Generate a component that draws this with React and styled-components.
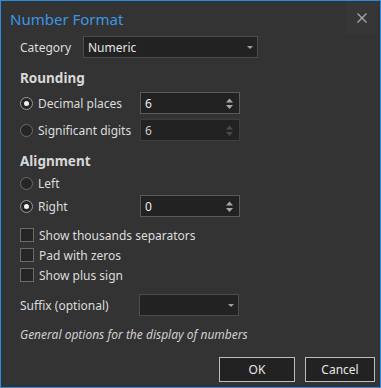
import styled, { createGlobalStyle } from 'styled-components';

const GlobalStyle = createGlobalStyle`
  html, body {
    margin: 0;
    padding: 0;
    background: #333333;
  }
  * {
    box-sizing: border-box;
  }
`;

const App = () => {
  return (
    <>
      <GlobalStyle />
      <Window>
        <TitleBar>
          <Title>Number Format</Title>
          <CloseButton aria-label="Close">
            <svg width="10" height="10" viewBox="0 0 10 10">
              <path d="M0.5 0.5 L9.5 9.5 M9.5 0.5 L0.5 9.5" stroke="#a8a8a8" strokeWidth="1.3" />
            </svg>
          </CloseButton>
        </TitleBar>

        <Body>
          <CategoryRow>
            <Label>Category</Label>
            <Select $width={175}>
              <span>Numeric</span>
              <DropArrow />
            </Select>
          </CategoryRow>

          <Heading>Rounding</Heading>
          <FieldRow $top={4}>
            <RadioLabel>
              <Radio $checked />
              Decimal places
            </RadioLabel>
            <Spinner value="6" />
          </FieldRow>
          <FieldRow $top={5}>
            <RadioLabel>
              <Radio />
              Significant digits
            </RadioLabel>
            <Spinner value="6" disabled />
          </FieldRow>

          <Heading>Alignment</Heading>
          <FieldRow $top={1}>
            <RadioLabel>
              <Radio />
              Left
            </RadioLabel>
          </FieldRow>
          <FieldRow $top={1}>
            <RadioLabel>
              <Radio $checked />
              Right
            </RadioLabel>
            <Spinner value="0" />
          </FieldRow>

          <Checks>
            <CheckRow>
              <CheckBox />
              Show thousands separators
            </CheckRow>
            <CheckRow>
              <CheckBox />
              Pad with zeros
            </CheckRow>
            <CheckRow>
              <CheckBox />
              Show plus sign
            </CheckRow>
          </Checks>

          <FieldRow $top={9}>
            <Label>Suffix (optional)</Label>
            <Select $width={100}>
              <span />
              <DropArrow />
            </Select>
          </FieldRow>

          <Hint>General options for the display of numbers</Hint>
        </Body>

        <Footer>
          <Button $width={76}>OK</Button>
          <Button $width={70}>Cancel</Button>
        </Footer>
      </Window>
    </>
  );
};

const Spinner = ({ value, disabled }) => (
  <SpinBox $disabled={disabled}>
    <SpinValue>{value}</SpinValue>
    <SpinArrows $disabled={disabled}>
      <svg width="9" height="13" viewBox="0 0 9 13">
        <path d="M4.5 1.5 L8 5.5 L1 5.5 Z" />
        <path d="M1 8 L8 8 L4.5 12 Z" />
      </svg>
    </SpinArrows>
  </SpinBox>
);

export default App;

//~~~~~~~~~~~~~~~~~~~
// Styled-Components
//~~~~~~~~~~~~~~~~~~~

const Window = styled.div`
  width: 381px;
  height: 388px;
  border: 1px solid #2a8ae0;
  background: #333333;
  color: #dcdcdc;
  font-family: 'Noto Sans', 'Open Sans', sans-serif;
  font-size: 12px;
  display: flex;
  flex-direction: column;
`;

const TitleBar = styled.div`
  height: 34px;
  display: flex;
  align-items: flex-start;
  justify-content: space-between;
`;

const Title = styled.h1`
  margin: 8px 0 0 9px;
  font-size: 15px;
  font-weight: normal;
  line-height: 20px;
  color: #3c97e3;
`;

const CloseButton = styled.button`
  width: 33px;
  height: 32px;
  margin: 1px 2px 0 0;
  border: none;
  background: #363636;
  display: flex;
  align-items: center;
  justify-content: center;
  padding: 0;
`;

const Body = styled.div`
  padding-left: 19px;
  display: flex;
  flex-direction: column;
  flex: 1;
`;

const CategoryRow = styled.div`
  display: flex;
  align-items: center;
  height: 22px;
  margin-top: 1px;

  & > span:first-child {
    width: 63px;
  }
`;

const Label = styled.span`
  width: 119px;
  white-space: nowrap;
`;

const Select = styled.div`
  width: ${(p) => p.$width}px;
  height: 22px;
  background: #222222;
  border: 1px solid #4c4c4c;
  display: flex;
  align-items: center;
  justify-content: space-between;
  padding: 0 4px 0 4px;
  color: #e6e6e6;
`;

const DropArrow = styled.span`
  width: 0;
  height: 0;
  border-left: 3px solid transparent;
  border-right: 3px solid transparent;
  border-top: 3px solid #a0a0a0;
`;

const Heading = styled.h2`
  margin: 10px 0 0;
  height: 20px;
  line-height: 20px;
  font-size: 13.5px;
  font-weight: bold;
  color: #d8d8d8;
`;

const FieldRow = styled.div`
  display: flex;
  align-items: center;
  height: 22px;
  margin-top: ${(p) => p.$top}px;
`;

const RadioLabel = styled.label`
  width: 120px;
  display: flex;
  align-items: center;
  gap: 5px;
  white-space: nowrap;
`;

const Radio = styled.span`
  width: 13px;
  height: 13px;
  border-radius: 50%;
  border: 1px solid ${(p) => (p.$checked ? '#9a9a9a' : '#6a6a6a')};
  background: #262626;
  display: flex;
  align-items: center;
  justify-content: center;

  &::after {
    content: '';
    width: 5px;
    height: 5px;
    border-radius: 50%;
    background: #f0f0f0;
    display: ${(p) => (p.$checked ? 'block' : 'none')};
  }
`;

const SpinBox = styled.div`
  width: 100px;
  height: 22px;
  background: #222222;
  border: 1px solid ${(p) => (p.$disabled ? '#3e3e3e' : '#5a5a5a')};
  display: flex;
  align-items: center;
  justify-content: space-between;
  padding: 0 5px 0 4px;
  color: ${(p) => (p.$disabled ? '#c8c8c8' : '#ececec')};
`;

const SpinValue = styled.span``;

const SpinArrows = styled.span`
  display: flex;

  svg path {
    fill: ${(p) => (p.$disabled ? '#4a4a4a' : '#a8a8a8')};
  }
`;

const Checks = styled.div`
  margin-top: 8px;
  display: flex;
  flex-direction: column;
`;

const CheckRow = styled.label`
  height: 20px;
  display: flex;
  align-items: center;
  gap: 5px;
`;

const CheckBox = styled.span`
  width: 14px;
  height: 14px;
  border: 1px solid #6a6a6a;
  background: #262626;
`;

const Hint = styled.p`
  margin: 11px 0 0;
  height: 16px;
  line-height: 16px;
  font-style: italic;
  color: #cfcfcf;
`;

const Footer = styled.div`
  display: flex;
  justify-content: flex-end;
  gap: 10px;
  padding: 0 5px 5px 0;
`;

const Button = styled.button`
  width: ${(p) => p.$width}px;
  height: 25px;
  background: #222222;
  border: 1px solid #bdbdbd;
  color: #e6e6e6;
  font-family: 'Noto Sans', 'Open Sans', sans-serif;
  font-size: 12px;
  padding: 0;
`;
